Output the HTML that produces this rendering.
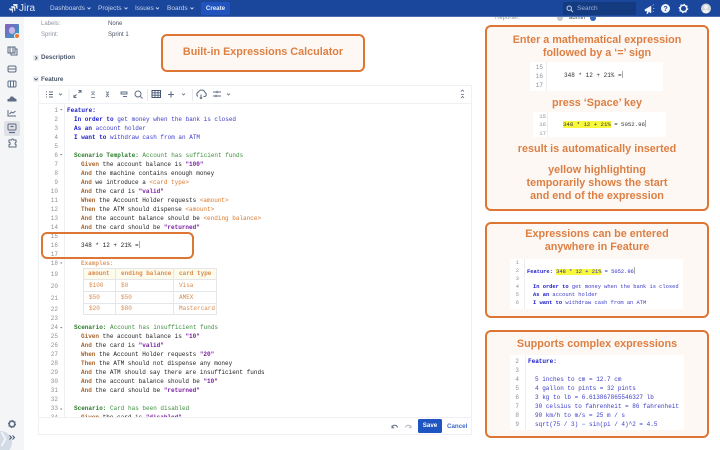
<!DOCTYPE html>
<html><head><meta charset="utf-8">
<style>
*{box-sizing:border-box}
html,body{margin:0;padding:0;width:720px;height:450px;overflow:hidden;background:#fff;font-family:"Liberation Sans",sans-serif}
#root{position:absolute;left:0;top:0;width:720px;height:450px;overflow:hidden}
.a{position:absolute;white-space:nowrap}
.nav{color:#c7d4ec;font-size:6.5px;line-height:9px;top:4px}
.box{position:absolute;border:2px solid #dc7632;background:#fdf8f4;border-radius:6px}
.t{position:absolute;left:485px;width:224px;text-align:center;color:#dd7f43;font-weight:bold;font-size:10.8px;line-height:13px;white-space:nowrap}
.m{font-family:"Liberation Mono",monospace;white-space:pre}
.code{position:absolute;left:0;width:472px;font-family:"Liberation Mono",monospace;font-size:6px;line-height:9px;color:#222;white-space:normal}
.code div{height:9px;white-space:pre}
.n{position:absolute;text-align:right;color:#8d9199;font-family:"Liberation Mono",monospace;font-size:6px;line-height:9px;white-space:nowrap}
.f{color:#1a1acb;font-weight:bold}.b{color:#3c3cc8}
.g{color:#2c7f2c;font-weight:bold}.gn{color:#3f8f3f}
.k{color:#a9642b;font-weight:bold}.s{color:#7a1fa0;font-weight:bold}.p{color:#d9782d}
.td{position:absolute;font-family:"Liberation Mono",monospace;font-size:6px;line-height:9px;color:#d98a4e;white-space:pre}
.th{font-weight:bold}
svg{position:absolute;overflow:visible}
.lab{font-size:6px;line-height:9px}
.snip{position:absolute;background:#fff}
.hl{background:#f8f83c}
.cur{display:inline-block;width:1px;height:7px;background:#aaa;vertical-align:-1px}
</style></head><body><div id="root">

<!-- sidebar -->
<div class="a" style="left:0;top:17px;width:24px;height:433px;background:#f4f5f7"></div>
<div class="a" style="left:4px;top:121px;width:16px;height:15px;background:#dfe1e6;border-radius:2px"></div>
<div class="a" style="left:5px;top:24px;width:14px;height:14px;background:linear-gradient(135deg,#8c5bc0,#2ba3c4);border-radius:1px"></div>
<div class="a" style="left:9px;top:27px;width:6px;height:7px;background:#c9b6e8;border-radius:3px"></div>
<div class="a" style="left:14px;top:33px;width:6px;height:6px;background:#e8792d;border-radius:50%;border:1px solid #f4f5f7"></div>
<svg style="left:0;top:0" width="24" height="450" fill="none" stroke="#5e6c84" stroke-width="1">
<path d="M8 47h7v6H8zM10 47v6M13 47v6M15.500 49H17v6h-6v-1.500"/>
<rect x="8" y="66" width="8" height="6" rx="1.500"/><path d="M8 69h8"/>
<rect x="8" y="81" width="8" height="6" rx="1"/><path d="M10.500 81v6M13.500 81v6"/>
<path d="M8 101h8v-1.500l-2-1-1.500-1.500H11l-1 2-2 .5z" fill="#5e6c84"/>
<path d="M8 110v6h8M9.500 114l2-2 1.500 1 2.500-2"/>
<rect x="8" y="124" width="8" height="6" rx="1"/><path d="M9 132.500h6M10.500 126.500h3" stroke-width="1.200"/>
<path d="M9 140h2.500a1 1 0 0 1 2 0H16v2.500a1 1 0 0 0 0 2V147H9v-2.200a1.200 1.200 0 0 0 0-2.400z"/>
<circle cx="12" cy="424" r="2.800" stroke-width="1.600"/><circle cx="12" cy="424" r="3.600" stroke-dasharray="1.400 1.400" stroke-width="1"/>
</svg>
<div class="a" style="left:-11px;top:431px;width:23px;height:23px;border-radius:50%;background:#d3dbe6"></div>
<svg style="left:0;top:430px" width="20" height="20" fill="none" stroke="#f4f5f7" stroke-width="1.800"><path d="M1.500 2l4 7-4 7"/></svg>
<svg style="left:9px;top:435px" width="7" height="6" fill="none" stroke="#42526e" stroke-width="1"><path d="M.5 .5l2 2-2 2M3.500 .5l2 2-2 2"/></svg>

<!-- details -->
<div class="a lab" style="left:41px;top:20px;color:#8b93a1">Labels:</div>
<div class="a lab" style="left:108px;top:20px;color:#4a5568">None</div>
<div class="a lab" style="left:41px;top:31px;color:#8b93a1">Sprint:</div>
<div class="a lab" style="left:108px;top:31px;color:#4a5568">Sprint 1</div>
<div class="a" style="left:33px;top:55px;width:6px;height:6px;background:#e9ebef;border-radius:1px"></div>
<svg style="left:33px;top:55px" width="6" height="6" fill="none" stroke="#42526e" stroke-width=".9"><path d="M2.300 1.300L4 3 2.300 4.700"/></svg>
<div class="a" style="left:41px;top:53px;font-size:6.200px;line-height:9px;font-weight:bold;color:#4a5568">Description</div>
<div class="a" style="left:33px;top:76px;width:6px;height:6px;background:#e9ebef;border-radius:1px"></div>
<svg style="left:33px;top:76px" width="6" height="6" fill="none" stroke="#42526e" stroke-width=".9"><path d="M1.300 2.300L3 4l1.700-1.700"/></svg>
<div class="a" style="left:41px;top:75px;font-size:6.200px;line-height:9px;font-weight:bold;color:#4a5568">Feature</div>

<!-- editor frame -->
<div class="a" style="left:38px;top:85px;width:434px;height:350px;border:1px solid #eff0f2;background:#fff"></div>
<div class="a" style="left:38px;top:103px;width:434px;height:1px;background:#f0f1f3"></div>
<div class="a" style="left:64px;top:104px;width:1px;height:313px;background:#eff0f2"></div>

<!-- toolbar -->
<svg style="left:40px;top:85px" width="432" height="18" fill="none" stroke="#5e6c84" stroke-width="1">
<path d="M6 7h1M9 7h4M6 9.500h1M9 9.500h4M6 12h1M9 12h4"/><path d="M19 8.500l1.500 1.500 1.500-1.500" stroke-width=".8"/>
<path d="M29 4v12" stroke="#e6e8eb"/>
<path d="M34 12l2.500-2.500M34 10v2.500h2.500M40.500 6L38.500 8M38.500 5.500h2.500V8"/>
<path d="M51 7h4M51.500 10l1.500-1.500 1.500 1.500M51 12.500h4" stroke-width=".8"/>
<path d="M66 6.500l1.500 1.500 1.500-1.500M66 12l1.500-1.500L69 12M66 9.200h3" stroke-width=".8"/>
<path d="M81 7h6v2h-6zM83 11.500h4" stroke-width=".9"/>
<circle cx="98" cy="9" r="3"/><path d="M100.500 11.500l2 2"/>
<path d="M107.500 4v12" stroke="#e6e8eb"/>
<rect x="112" y="5.500" width="8.500" height="7" stroke="#42526e" stroke-width="1"/><path d="M112 7.800h8.500M112 10.200h8.500M115 5.500v7M118 5.500v7" stroke="#42526e" stroke-width=".8"/>
<path d="M128 9.500h6M131 6.500v6" stroke-width="1.100"/><path d="M142 8.500l1.500 1.500 1.500-1.500" stroke-width=".8"/>
<path d="M152.500 4v12" stroke="#e6e8eb"/>
<path d="M158 11.500a2.500 2.500 0 0 1 .5-4.500 3.500 3.500 0 0 1 6.500.5 2.200 2.200 0 0 1 0 4h-1.500M161 9.500v4M159.800 12.500l1.200 1.200 1.200-1.200"/>
<path d="M173 7h8M173 11h8M177 5.800v2.400M176 9.800v2.400" stroke-width=".9"/><path d="M187 8.500l1.500 1.500 1.500-1.500" stroke-width=".8"/>
<path d="M421 6.500l1.500-1.500 1.500 1.500M421 9.500h3M421 13l1.500-1.500 1.500 1.500" stroke-width=".8"/>
</svg>

<!-- line numbers -->
<div class="n" style="left:40px;top:106px;width:18px">1<br>2<br>3<br>4<br>5<br>6<br>7<br>8<br>9<br>10<br>11<br>12<br>13<br>14<br>15<br>16<br>17<br>18</div>
<div class="n" style="left:40px;top:270px;width:18px">19</div>
<div class="n" style="left:40px;top:282px;width:18px">20</div>
<div class="n" style="left:40px;top:294px;width:18px">21</div>
<div class="n" style="left:40px;top:305px;width:18px">22</div>
<div class="n" style="left:40px;top:314px;width:18px;height:103px;overflow:hidden">23<br>24<br>25<br>26<br>27<br>28<br>29<br>30<br>31<br>32<br>33<br>34</div>
<svg style="left:0;top:0" width="70" height="420" fill="#7a8290"><path d="M60 109l2.400 0-1.200 1.500zM60 154l2.400 0-1.200 1.500zM60 262.500l2.400 0-1.200 1.500zM60 327l2.400 0-1.200 1.500zM60 408.500l2.400 0-1.200 1.500z"/></svg>

<!-- code -->
<div class="a" style="left:0;top:104px;width:472px;height:313px;overflow:hidden">
<div class="code" style="top:2px">
<div style="padding-left:67px"><span class="f">Feature:</span></div>
<div style="padding-left:74px"><span class="f">In order to</span><span class="b"> get money when the bank is closed</span></div>
<div style="padding-left:74px"><span class="f">As an</span><span class="b"> account holder</span></div>
<div style="padding-left:74px"><span class="f">I want to</span><span class="b"> withdraw cash from an ATM</span></div>
<div></div>
<div style="padding-left:74px"><span class="g">Scenario Template:</span><span class="gn"> Account has sufficient funds</span></div>
<div style="padding-left:81px"><span class="k">Given</span> the account balance is <span class="s">"100"</span></div>
<div style="padding-left:81px"><span class="k">And</span> the machine contains enough money</div>
<div style="padding-left:81px"><span class="k">And</span> we introduce a <span class="p">&lt;card type&gt;</span></div>
<div style="padding-left:81px"><span class="k">And</span> the card is <span class="s">"valid"</span></div>
<div style="padding-left:81px"><span class="k">When</span> the Account Holder requests <span class="p">&lt;amount&gt;</span></div>
<div style="padding-left:81px"><span class="k">Then</span> the ATM should dispense <span class="p">&lt;amount&gt;</span></div>
<div style="padding-left:81px"><span class="k">And</span> the account balance should be <span class="p">&lt;ending balance&gt;</span></div>
<div style="padding-left:81px"><span class="k">And</span> the card should be <span class="s">"returned"</span></div>
<div></div>
<div style="padding-left:81px">348 * 12 + 21% =<span class="cur"></span></div>
<div></div>
<div style="padding-left:81px"><span class="p" style="font-weight:bold;color:#dc9a62">Examples:</span></div>
</div>
<div class="code" style="top:210px">
<div></div>
<div style="padding-left:74px"><span class="g">Scenario:</span><span class="gn"> Account has insufficient funds</span></div>
<div style="padding-left:81px"><span class="k">Given</span> the account balance is <span class="s">"10"</span></div>
<div style="padding-left:81px"><span class="k">And</span> the card is <span class="s">"valid"</span></div>
<div style="padding-left:81px"><span class="k">When</span> the Account Holder requests <span class="s">"20"</span></div>
<div style="padding-left:81px"><span class="k">Then</span> the ATM should not dispense any money</div>
<div style="padding-left:81px"><span class="k">And</span> the ATM should say there are insufficient funds</div>
<div style="padding-left:81px"><span class="k">And</span> the account balance should be <span class="s">"10"</span></div>
<div style="padding-left:81px"><span class="k">And</span> the card should be <span class="s">"returned"</span></div>
<div></div>
<div style="padding-left:74px"><span class="g">Scenario:</span><span class="gn"> Card has been disabled</span></div>
<div style="padding-left:81px"><span class="k">Given</span> the card is <span class="s">"disabled"</span></div>
</div>
</div>

<!-- examples table -->
<div class="a" style="left:83px;top:268px;width:134px;height:47px;border:1px solid #e4e6e9"></div>
<div class="a" style="left:84px;top:269px;width:132px;height:10px;background:#fdfbeb"></div>
<div class="a" style="left:83px;top:279px;width:134px;height:1px;background:#e4e6e9"></div>
<div class="a" style="left:83px;top:291px;width:134px;height:1px;background:#e4e6e9"></div>
<div class="a" style="left:83px;top:303px;width:134px;height:1px;background:#e4e6e9"></div>
<div class="a" style="left:115px;top:268px;width:1px;height:47px;background:#e4e6e9"></div>
<div class="a" style="left:173px;top:268px;width:1px;height:47px;background:#e4e6e9"></div>
<div class="td th" style="left:88px;top:269px">amount</div><div class="td th" style="left:121px;top:269px">ending balance</div><div class="td th" style="left:179px;top:269px">card type</div>
<div class="td" style="left:89px;top:281px">$100</div><div class="td" style="left:121px;top:281px">$0</div><div class="td" style="left:179px;top:281px">Visa</div>
<div class="td" style="left:89px;top:293px">$50</div><div class="td" style="left:121px;top:293px">$50</div><div class="td" style="left:179px;top:293px">AMEX</div>
<div class="td" style="left:89px;top:304px">$20</div><div class="td" style="left:121px;top:304px">$80</div><div class="td" style="left:179px;top:304px">Mastercard</div>

<!-- highlight outline -->
<div class="a" style="left:41px;top:232px;width:153px;height:27px;border:2px solid #dc7632;border-radius:6px"></div>

<!-- footer -->
<div class="a" style="left:38px;top:417px;width:434px;height:1px;background:#eff0f2"></div>
<svg style="left:390px;top:422px" width="24" height="10" fill="none" stroke="#5e6c84" stroke-width="1"><path d="M2 5.500a2.800 2.800 0 0 1 5.500 0M2 3.500v2.300h2.200"/><path stroke="#b4bac4" d="M15.500 5.500a2.800 2.800 0 0 1 5.500 0M21 3.500v2.300h-2.200"/></svg>
<div class="a" style="left:418px;top:419px;width:24px;height:14px;background:#1f55c0;border-radius:1.500px;color:#fff;font-size:6.200px;font-weight:bold;line-height:14px;text-align:center">Save</div>
<div class="a" style="left:447px;top:422px;font-size:6.200px;line-height:9px;color:#3e6bc9;font-weight:bold">Cancel</div>

<!-- title callout -->
<div class="box" style="left:161px;top:34px;width:204px;height:38px"></div>
<div class="a" style="left:161px;top:34px;width:204px;height:38px;line-height:37px;text-align:center;color:#dd8043;font-weight:bold;font-size:10.800px">Built-in Expressions Calculator</div>

<!-- right column -->
<div class="a lab" style="left:495px;top:14px;color:#8b93a1">Reporter:</div>
<div class="a lab" style="left:569px;top:14px;color:#4a5568">admin</div>
<div class="a" style="left:557px;top:15px;width:6px;height:6px;border-radius:50%;background:#c4c8ce"></div>
<div class="a" style="left:590px;top:15px;width:6px;height:6px;border-radius:50%;background:#2f63c0"></div>

<div class="box" style="left:485px;top:25px;width:224px;height:186px"></div>
<div class="t" style="top:34px">Enter a mathematical expression</div>
<div class="t" style="top:47px">followed by a ‘=’ sign</div>
<div class="snip" style="left:530px;top:62px;width:133px;height:29px"></div>
<div class="a" style="left:546px;top:62px;width:1px;height:29px;background:#eceef0"></div>
<div class="n" style="left:533px;top:63px;width:10px;font-size:6px">15<br>16<br>17</div>
<div class="a m" style="left:564px;top:71px;font-size:6px;line-height:9px;color:#333">348 * 12 + 21% =<span class="cur"></span></div>
<div class="t" style="top:97px">press ‘Space’ key</div>
<div class="snip" style="left:533px;top:112px;width:133px;height:25px"></div>
<div class="a" style="left:547px;top:112px;width:1px;height:25px;background:#eceef0"></div>
<div class="n" style="left:536px;top:113px;width:10px;font-size:5.600px;line-height:8.300px">15<br>16<br>17</div>
<div class="a m" style="left:563px;top:120px;font-size:5.700px;line-height:10px;color:#333"><span class="hl">348 * 12 + 21%</span> = 5052.96<span class="cur"></span></div>
<div class="t" style="top:143px">result is automatically inserted</div>
<div class="t" style="top:164px">yellow highlighting</div>
<div class="t" style="top:177px">temporarily shows the start</div>
<div class="t" style="top:190px">and end of the expression</div>

<div class="box" style="left:485px;top:222px;width:224px;height:96px"></div>
<div class="t" style="top:228px">Expressions can be entered</div>
<div class="t" style="top:241px">anywhere in Feature</div>
<div class="snip" style="left:510px;top:259px;width:173px;height:50px"></div>
<div class="a" style="left:524px;top:259px;width:1px;height:50px;background:#eceef0"></div>
<div class="n" style="left:512px;top:259px;width:7px;font-size:5.400px;line-height:8px">1<br>2<br>3<br>4<br>5<br>6</div>
<div class="a m" style="left:527px;top:267px;font-size:5.400px;line-height:8px;color:#2a2ac8"><span class="f">Feature:</span> <span class="hl">348 * 12 + 21%</span> = 5052.96<span class="cur"></span></div>
<div class="a m" style="left:533px;top:283px;font-size:5.400px;line-height:8px;color:#3c3cc8"><span class="f">In order to</span> get money when the bank is closed<br><span class="f">As an</span> account holder<br><span class="f">I want to</span> withdraw cash from an ATM</div>

<div class="box" style="left:485px;top:330px;width:224px;height:108px"></div>
<div class="t" style="top:338px">Supports complex expressions</div>
<div class="snip" style="left:510px;top:355px;width:174px;height:75px"></div>
<div class="a" style="left:525px;top:355px;width:1px;height:75px;background:#eceef0"></div>
<div class="n" style="left:512px;top:357px;width:7px">2<br>3<br>4<br>5<br>6<br>7<br>8<br>9</div>
<div class="a m" style="left:528px;top:357px;font-size:6px;line-height:9px"><span class="f">Feature:</span></div>
<div class="a m" style="left:535px;top:375px;font-size:6px;line-height:9px;color:#3c3cc8">5 inches to cm = 12.7 cm
4 gallon to pints = 32 pints
3 kg to lb = 6.613867865546327 lb
30 celsius to fahrenheit = 86 fahrenheit
90 km/h to m/s = 25 m / s
sqrt(75 / 3) − sin(pi / 4)^2 = 4.5</div>

<!-- header -->
<div class="a" style="left:0;top:0;width:720px;height:17px;background:#1a469b;border-bottom:1px solid #4a6db0"></div>
<svg style="left:9px;top:4px" width="9" height="9" fill="#dfe6f3"><path d="M8.500 0H4a2 2 0 0 0 2 2h1v1a2 2 0 0 0 1.500 2zM6.300 2.200H2a2 2 0 0 0 2 2h1v1a2 2 0 0 0 1.300 2zM4 4.500H0a2 2 0 0 0 2 2h1v.8A2 2 0 0 0 4 9z"/></svg>
<div class="a" style="left:19px;top:2px;color:#dfe6f3;font-size:10px;line-height:13px">Jira</div>
<div class="a nav" style="left:50px">Dashboards</div>
<div class="a nav" style="left:98px">Projects</div>
<div class="a nav" style="left:135px">Issues</div>
<div class="a nav" style="left:167px">Boards</div>
<svg style="left:0;top:0" width="200" height="17" fill="none" stroke="#c7d4ec" stroke-width=".9"><path d="M87.500 7.500l1.500 1.500 1.500-1.500M124.500 7.500l1.500 1.500 1.500-1.500M156 7.500l1.500 1.500 1.500-1.500M190.500 7.500l1.500 1.500 1.500-1.500"/></svg>
<div class="a" style="left:201px;top:2px;width:29px;height:13px;background:#2053bd;border-radius:1.500px;color:#e6edf8;font-size:6.200px;font-weight:bold;line-height:13px;text-align:center">Create</div>
<div class="a" style="left:563px;top:2px;width:73px;height:13px;background:#143a80;border-radius:1.500px"></div>
<svg style="left:566px;top:5px" width="8" height="8" fill="none" stroke="#c7d4ec" stroke-width="1"><circle cx="3.200" cy="3.200" r="2.200"/><path d="M5 5l2 2"/></svg>
<div class="a nav" style="left:577px;color:#9fb2d6">Search</div>
<svg style="left:644px;top:2px" width="72" height="14" fill="#eef2f9">
<path d="M1 7.500l6-3.500v7l-2.500-1.400-.7 2H2.800l.5-2.600L1 9zM8.500 3.500l1.500-1M9 6.500h1.500M8.700 9l1.300.7" stroke="#eef2f9" stroke-width=".5"/>
<circle cx="21.500" cy="6.500" r="4.500"/><text x="21.500" y="9" text-anchor="middle" font-size="7" font-weight="bold" fill="#1a469b" font-family="Liberation Sans">?</text>
<circle cx="39.500" cy="6.500" r="3.300" fill="none" stroke="#eef2f9" stroke-width="1.500"/><circle cx="39.500" cy="6.500" r="4.300" fill="none" stroke="#eef2f9" stroke-width="1" stroke-dasharray="1.500 1.850"/>
<circle cx="62" cy="6.500" r="5" fill="#d3d5d9"/><circle cx="62" cy="5" r="2" fill="#f2f2f3"/><path d="M58.500 10a3.800 3.800 0 0 1 7 0 5 5 0 0 1-7 0z" fill="#f2f2f3"/>
</svg>
</div></body></html>
